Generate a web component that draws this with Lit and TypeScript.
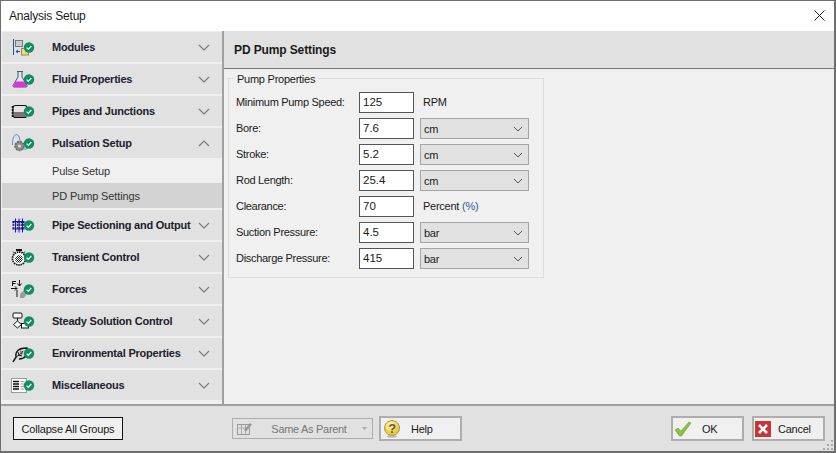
import { LitElement, html, css, svg } from "lit";
import { customElement } from "lit/decorators.js";

const badge = svg`<circle cx="21" cy="10.5" r="5.2" fill="#0f8f5f"/><path d="M18.600 10.600l1.700 1.800 3-3.400" fill="none" stroke="#fff" stroke-width="1.200"/>`;
const icons: Record<string, unknown> = {
  modules: svg`<path d="M5.500 2v16" stroke="#2a4fa8" fill="none"/><rect x="7.500" y="3.500" width="7" height="6" fill="#c4ccd6" stroke="#777"/><rect x="13.500" y="11.500" width="7" height="6.500" fill="#f4d97a" stroke="#9a8a50"/><path d="M8 14.500h4M8 14.500l2-1.500M8 14.500l2 1.500" stroke="#2a4fa8" fill="none"/>`,
  fluid: svg`<path d="M9 2.500h6M10 3v5L5 16.500q-.5 1.500 1 1.500h12q1.500 0 1-1.500L14 8V3" fill="#d4ecea" stroke="#556"/><path d="M7.500 12.500h9l3 5.500H5z" fill="#e22fe0"/>`,
  pipes: svg`<rect x="5" y="4.500" width="14" height="12" rx="2.500" fill="#e4e4e4" stroke="#111" stroke-width="1.200"/><rect x="6" y="11" width="13" height="5" fill="#777"/><path d="M4.500 5v11" stroke="#111" stroke-width="1.500" stroke-dasharray="2 1"/>`,
  pulse: svg`<path d="M4.500 12C4 2 9 -1 11 4s2 11 5 12 5-2 6-4" fill="none" stroke="#5a8ac8"/><circle cx="11.500" cy="13" r="4.500" fill="#8c8c8c" stroke="#666" stroke-dasharray="2 1" stroke-width="1.500"/><circle cx="11.500" cy="13" r="1.500" fill="#ddd"/>`,
  section: svg`<path d="M4.500 7.500h12M4.500 10h12M4.500 13h12" stroke="#111" stroke-width="1.300" stroke-dasharray="1.500 .6" fill="none"/><path d="M7.500 3.500v14M11 3.500v14M14.500 3.500v14M4.500 6.500h12M4.500 14h12" stroke="#1010e0" fill="none"/>`,
  transient: svg`<defs><pattern id="stip" width="2" height="2" patternUnits="userSpaceOnUse"><rect width="2" height="2" fill="#fff"/><rect width="1" height="1" fill="#222"/><rect x="1" y="1" width="1" height="1" fill="#222"/></pattern></defs><rect x="8" y="2" width="6" height="2" fill="#111"/><path d="M5 4.500l1.500 1.500M17 4.500L15.500 6" stroke="#111"/><circle cx="11" cy="11.500" r="6.500" fill="#fff" stroke="#111" stroke-width="1.800" stroke-dasharray="1.500 .8"/><circle cx="11" cy="12" r="3.800" fill="url(#stip)"/>`,
  forces: svg`<path d="M4.500 7V2.500H8M4.500 4.500h3" stroke="#111" fill="none"/><path d="M11.500 1v6M9.500 4.500l2 2.500 2-2.500M3 9.500h6M7 7.500l2 2-2 2M9 11v7" stroke="#111" fill="none"/><path d="M12 19v-4l5-5 3 3-4 6z" fill="#9c9c9c"/>`,
  steady: svg`<rect x="5" y="2" width="9" height="5" rx="1" fill="#fff" stroke="#111"/><path d="M9.500 7v3" stroke="#111"/><path d="M9.500 10l4 3.500-4 3.500-4-3.500z" fill="#fff" stroke="#111"/><rect x="13.500" y="12.500" width="7" height="4.500" fill="#fff" stroke="#111"/>`,
  env: svg`<path d="M5 19c1-2 2-3 3-5-1-6 3-9 11-9 1 7-2 11-8 11" fill="#d8d8d8" stroke="#111" stroke-width="1.400"/><path d="M8 14c2-1 5-3 7-6M10 9l1 3M14 13l-3-1" fill="none" stroke="#111"/><path d="M12 7l3 3-2 2z" fill="#555"/>`,
  misc: svg`<rect x="3.500" y="3.500" width="15" height="14" fill="#fff" stroke="#9a9a9a"/><path d="M5 6.500h6M5 9h6M5 11.500h6M5 14h6" stroke="#111" stroke-width="1.300"/><path d="M12.500 6.500h4M12.500 9h4M12.500 11.500h4M12.500 14h4" stroke="#999"/>`,
};

const down = html`<svg class="chev" viewBox="0 0 12 7" width="12" height="7"><path d="M1 1l5 5 5-5" fill="none" stroke="#777" stroke-width="1.100"/></svg>`;
const up = html`<svg class="chev" viewBox="0 0 12 7" width="12" height="7"><path d="M1 6l5-5 5 5" fill="none" stroke="#777" stroke-width="1.100"/></svg>`;
const caret = html`<svg viewBox="0 0 10 6" width="10" height="6"><path d="M1 1l4 4 4-4" fill="none" stroke="#555"/></svg>`;

const groupsA = [["modules", "Modules"], ["fluid", "Fluid Properties"], ["pipes", "Pipes and Junctions"]];
const groupsB = [["section", "Pipe Sectioning and Output"], ["transient", "Transient Control"], ["forces", "Forces"], ["steady", "Steady Solution Control"], ["env", "Environmental Properties"], ["misc", "Miscellaneous"]];

type Row = { label: string; value: string; unit: unknown; select: boolean };
const rows: Row[] = [
  { label: "Minimum Pump Speed:", value: "125", unit: "RPM", select: false },
  { label: "Bore:", value: "7.6", unit: "cm", select: true },
  { label: "Stroke:", value: "5.2", unit: "cm", select: true },
  { label: "Rod Length:", value: "25.4", unit: "cm", select: true },
  { label: "Clearance:", value: "70", unit: html`Percent <span class="pct">(%)</span>`, select: false },
  { label: "Suction Pressure:", value: "4.5", unit: "bar", select: true },
  { label: "Discharge Pressure:", value: "415", unit: "bar", select: true },
];

@customElement("app-root")
export class AppRoot extends LitElement {
  static styles = css`
    :host { display: block; width: 836px; height: 453px; font-family: "Liberation Sans", Arial, sans-serif; font-size: 11px; letter-spacing: -0.25px; color: #1a1a1a; }
    * { box-sizing: border-box; }
    .window { width: 836px; height: 453px; border: 1px solid #6e6e6e; border-right-width: 2px; border-bottom-width: 2px; background: #f0f0f0; display: flex; flex-direction: column; }
    .title { height: 30px; background: #fff; display: flex; align-items: center; justify-content: space-between; padding: 0 9px 0 8px; flex: none; white-space: nowrap; font-size: 12px; letter-spacing: -0.2px; }
    .title svg { margin-bottom: 2px; }
    .main { flex: 1; display: flex; min-height: 0; }
    .side { width: 221px; padding: 1px 0 0 1px; display: flex; flex-direction: column; gap: 2px; flex: none; }
    .group { height: 30px; background: #e1e1e1; display: flex; align-items: center; flex: none; padding-right: 12px; }
    .gicon { width: 27px; height: 20px; margin-left: 6px; flex: none; }
    .gname { flex: 1; margin-left: 17px; font-weight: 700; white-space: nowrap; color: #20202c; letter-spacing: -0.22px; }
    .subs { display: flex; flex-direction: column; margin-top: -2px; }
    .sub { height: 25px; display: flex; align-items: center; padding-left: 50px; color: #333; letter-spacing: -0.13px; }
    .sub.on { background: #d3d3d3; }
    .panel { flex: 1; border-left: 2px solid #a0a0a0; display: flex; flex-direction: column; }
    .phead { height: 38px; background: #e1e1e1; border-bottom: 1px solid #777; display: flex; align-items: center; padding: 1px 0 0 10px; font-weight: 700; font-size: 12px; letter-spacing: -0.12px; flex: none; }
    .box { position: relative; width: 316px; height: 200px; margin: 9px 0 0 4px; border: 1px solid #dcdcdc; padding: 13px 0 0 7px; display: flex; flex-direction: column; gap: 5px; }
    .legend { position: absolute; left: 5px; top: -8px; background: #f0f0f0; padding: 0 3px; line-height: 16px; white-space: nowrap; }
    .row { display: flex; align-items: center; height: 21px; white-space: nowrap; }
    .lbl { width: 123px; padding-bottom: 2px; letter-spacing: -0.3px; }
    .inp { width: 55px; height: 21px; border: 1px solid #555; background: #fff; padding: 0 0 2px 3px; display: flex; align-items: center; font-size: 11.5px; letter-spacing: 0; }
    .unit { margin-left: 9px; padding-bottom: 1px; }
    .pct { color: #2f5c94; }
    .sel { margin-left: 6px; width: 109px; height: 21px; background: #e1e1e1; border: 1px solid #a5a5a5; display: flex; align-items: center; justify-content: space-between; padding: 0 5px 0 3px; }
    .foot { height: 47px; flex: none; background: #e1e1e1; border-top: 2px solid #a0a0a0; display: flex; align-items: center; padding: 0 9px 0 12px; position: relative; white-space: nowrap; }
    .btn { height: 25px; border: 2px solid #adadad; background: #f0f0f0; display: flex; align-items: center; flex: none; }
    .collapse { width: 110px; height: 23px; border: 1px solid #111; justify-content: center; letter-spacing: -0.2px; }
    .same { margin-left: 109px; width: 141px; height: 21px; border: 1px solid #adadad; background: #e1e1e1; color: #777; display: flex; align-items: center; flex: none; padding: 0 4px 0 3px; letter-spacing: -0.3px; }
    .same span { flex: 1; text-align: center; padding-left: 4px; }
    .help { margin-left: 6px; width: 83px; padding-left: 2px; }
    .help span { margin-left: 10px; }
    .ok { margin-left: auto; width: 73px; padding-left: 1px; }
    .ok span { margin-left: 10px; }
    .cancel { margin-left: 8px; width: 73px; padding-left: 1px; }
    .cancel span { margin-left: 7px; }
    .grip { position: absolute; right: 0; bottom: 0; }
  `;

  private group(g: string[], open = false) {
    return html`<div class="group"><svg class="gicon" viewBox="0 0 27 20">${icons[g[0]]}${badge}</svg><span class="gname">${g[1]}</span>${open ? up : down}</div>`;
  }

  render() {
    return html`<div class="window">
      <div class="title"><span>Analysis Setup</span>
        <svg width="11" height="11" viewBox="0 0 11 11"><path d="M.5.500l10 10M10.500.500l-10 10" stroke="#222" fill="none"/></svg></div>
      <div class="main">
        <div class="side">
          ${groupsA.map((g) => this.group(g))}
          ${this.group(["pulse", "Pulsation Setup"], true)}
          <div class="subs"><div class="sub">Pulse Setup</div><div class="sub on">PD Pump Settings</div></div>
          ${groupsB.map((g) => this.group(g))}
        </div>
        <div class="panel">
          <div class="phead">PD Pump Settings</div>
          <div class="box"><div class="legend">Pump Properties</div>
            ${rows.map((r) => html`<div class="row"><span class="lbl">${r.label}</span><span class="inp">${r.value}</span>
              ${r.select ? html`<span class="sel">${r.unit}${caret}</span>` : html`<span class="unit">${r.unit}</span>`}</div>`)}
          </div>
        </div>
      </div>
      <div class="foot">
        <div class="btn collapse">Collapse All Groups</div>
        <div class="same"><svg width="17" height="15" viewBox="0 0 17 15"><rect x="1.500" y="3.500" width="12" height="10" fill="none" stroke="#999"/><path d="M1.500 7h12M5.500 4v9M9.500 4v9" stroke="#aaa"/><path d="M8 9l6-7 2 1.500-6 7z" fill="#999"/></svg><span>Same As Parent</span><svg width="7" height="4" viewBox="0 0 7 4"><path d="M1 0h5L3.500 3z" fill="#aaa"/></svg></div>
        <div class="btn help"><svg width="18" height="18" viewBox="0 0 18 18"><defs><radialGradient id="hg" cx=".4" cy=".3" r=".8"><stop offset="0" stop-color="#fff6b8"/><stop offset="1" stop-color="#e0b820"/></radialGradient></defs><ellipse cx="9" cy="16.500" rx="5" ry="1.200" fill="#bbb"/><circle cx="9" cy="8" r="7.500" fill="url(#hg)" stroke="#b09a30"/><text x="9" y="13" text-anchor="middle" font-size="13" font-weight="700" fill="#6a5a20" font-family="Liberation Sans">?</text></svg><span>Help</span></div>
        <div class="btn ok"><svg width="18" height="16" viewBox="0 0 18 16"><path d="M1 9l3-2 3 3 8-9 2 1-9.500 13h-2z" fill="#8fc040" stroke="#6f9a30" stroke-width=".6"/></svg><span>OK</span></div>
        <div class="btn cancel"><svg width="16" height="16" viewBox="0 0 16 16"><rect width="16" height="16" fill="#c8343a"/><path d="M4 4l8 8M12 4l-8 8" stroke="#fff" stroke-width="2.600"/></svg><span>Cancel</span></div>
        <svg class="grip" width="12" height="12" viewBox="0 0 12 12" fill="#aaa"><rect x="9" y="1" width="2" height="2"/><rect x="5" y="5" width="2" height="2"/><rect x="9" y="5" width="2" height="2"/><rect x="1" y="9" width="2" height="2"/><rect x="5" y="9" width="2" height="2"/><rect x="9" y="9" width="2" height="2"/></svg>
      </div>
    </div>`;
  }
}
